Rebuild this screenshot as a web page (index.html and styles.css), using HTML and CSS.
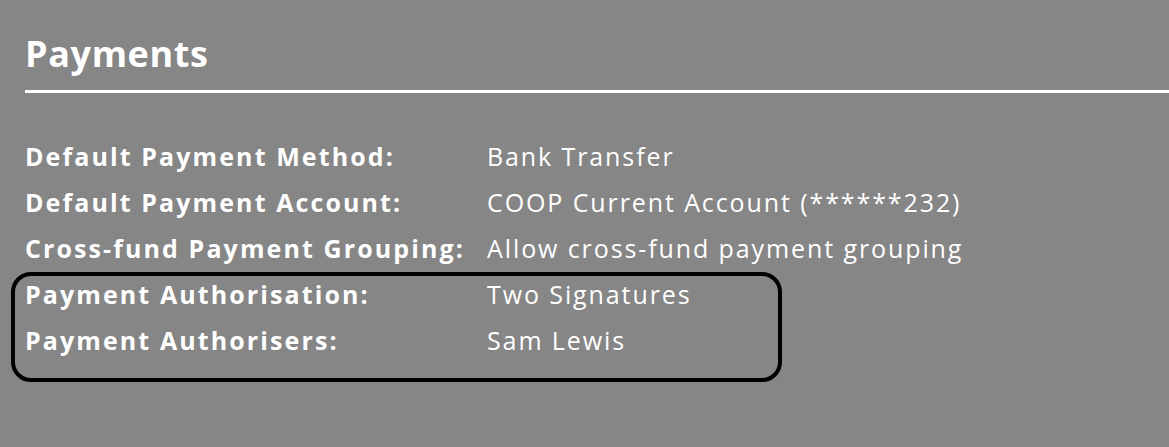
FILE: index.html
```html
<!DOCTYPE html>
<html lang="en">
<head>
<meta charset="utf-8">
<title>Payments</title>
<link rel="stylesheet" href="styles.css">
</head>
<body>
<section class="panel">
  <h1 class="title">Payments</h1>
  <dl class="details">
    <div class="row"><dt>Default Payment Method:</dt><dd>Bank Transfer</dd></div>
    <div class="row"><dt>Default Payment Account:</dt><dd>COOP Current Account (******232)</dd></div>
    <div class="row"><dt>Cross-fund Payment Grouping:</dt><dd>Allow cross-fund payment grouping</dd></div>
    <div class="group">
      <div class="row"><dt>Payment Authorisation:</dt><dd>Two Signatures</dd></div>
      <div class="row"><dt>Payment Authorisers:</dt><dd>Sam Lewis</dd></div>
    </div>
  </dl>
</section>
</body>
</html>
```
FILE: styles.css
```css
html, body {
  margin: 0;
  padding: 0;
  background: #868686;
}
body {
  width: 1169px;
  height: 447px;
  overflow: hidden;
  font-family: "Open Sans", "Liberation Sans", sans-serif;
  color: #fff;
}
.panel {
  padding: 30px 0 0 25px;
}
.title {
  margin: 0;
  font-size: 36px;
  line-height: 48px;
  font-weight: 700;
  letter-spacing: 0.6px;
  padding-bottom: 12px;
  border-bottom: 3px solid #fff;
}
.details {
  margin: 40px 0 0 0;
  padding: 0;
}
.row {
  display: grid;
  grid-template-columns: 462px 1fr;
  font-size: 25px;
  line-height: 46px;
}
.row dt {
  font-weight: 700;
  letter-spacing: 2.1px;
}
.row dd {
  margin: 0;
  font-weight: 400;
  letter-spacing: 1.9px;
}
.group {
  position: relative;
}
.group::before {
  content: "";
  position: absolute;
  left: -14px;
  top: 1px;
  width: 763px;
  height: 102px;
  border: 4px solid #000;
  border-radius: 20px;
  pointer-events: none;
}
```
